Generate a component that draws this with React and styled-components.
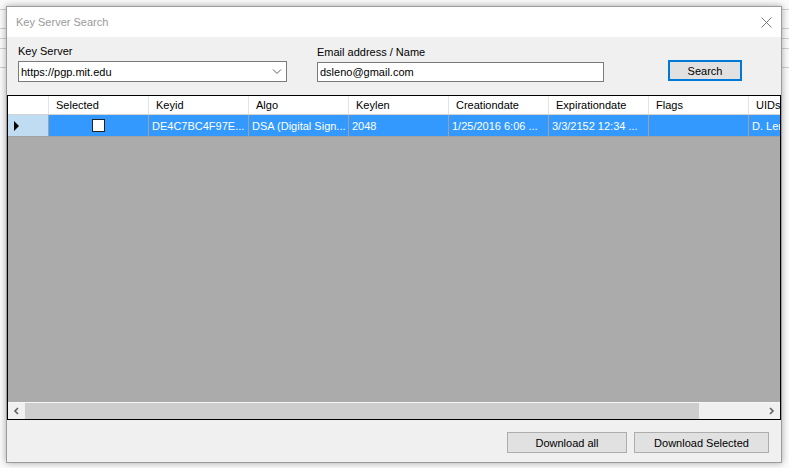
import styled, { createGlobalStyle } from 'styled-components';

const GlobalStyle = createGlobalStyle`
  body {
    margin: 0;
    background: #ffffff;
    font-family: "Liberation Sans", Arial, sans-serif;
    font-size: 11px;
    color: #000;
  }
`;

const Desktop = styled.div`
  width: 789px;
  height: 468px;
  overflow: hidden;
  box-sizing: border-box;
  padding: 6px 0 0 6px;
  background:
    linear-gradient(#cfcfcf, #cfcfcf) 0 9px / 100% 1px no-repeat,
    linear-gradient(#cfcfcf, #cfcfcf) 0 28px / 100% 1px no-repeat,
    linear-gradient(#cfcfcf, #cfcfcf) 0 38px / 100% 1px no-repeat,
    linear-gradient(#cfcfcf, #cfcfcf) 0 48px / 100% 1px no-repeat,
    linear-gradient(#cfcfcf, #cfcfcf) 0 67px / 100% 1px no-repeat,
    #fbfbfb;
`;

const Window = styled.div`
  width: 776px;
  height: 457px;
  box-sizing: border-box;
  border: 1px solid #9c9c9c;
  display: flex;
  flex-direction: column;
  box-shadow: 0 0 7px rgba(0, 0, 0, 0.35);
`;

const TitleBar = styled.div`
  height: 30px;
  flex: none;
  background: #ffffff;
  display: flex;
  align-items: center;
  justify-content: space-between;
  padding: 0 9px 0 9px;
`;

const Title = styled.span`
  color: #9a9a9a;
  font-size: 11px;
`;

const Body = styled.div`
  flex: 1;
  background: #f0f0f0;
  display: flex;
  flex-direction: column;
`;

const FormRow = styled.div`
  height: 58px;
  flex: none;
  box-sizing: border-box;
  padding: 8px 0 0 11px;
  display: flex;
  align-items: flex-start;
`;

const Field = styled.div`
  display: flex;
  flex-direction: column;
  gap: 3px;
  width: ${(p) => p.$width}px;
  margin-left: ${(p) => p.$left || 0}px;
  margin-top: ${(p) => p.$top || 0}px;
`;

const Label = styled.label`
  line-height: 13px;
`;

const Combo = styled.div`
  height: 21px;
  box-sizing: border-box;
  border: 1px solid #7a7a7a;
  background: #fff;
  display: flex;
  align-items: center;
  justify-content: space-between;
  padding: 0 4px 0 2px;
`;

const TextInput = styled.div`
  height: 20px;
  box-sizing: border-box;
  border: 1px solid #7a7a7a;
  background: #fff;
  display: flex;
  align-items: center;
  padding: 0 2px;
`;

const Button = styled.button`
  width: ${(p) => p.$width}px;
  height: 21px;
  box-sizing: border-box;
  margin: ${(p) => p.$margin || 0};
  padding: 0;
  background: #e1e1e1;
  border: ${(p) => (p.$focused ? '2px solid #0078d7' : '1px solid #adadad')};
  font-family: inherit;
  font-size: 11px;
  color: #000;
`;

const Grid = styled.div`
  height: 325px;
  flex: none;
  box-sizing: border-box;
  border: 1px solid #000;
  display: flex;
  flex-direction: column;
  overflow: hidden;
`;

const HeaderRow = styled.div`
  height: 19px;
  flex: none;
  box-sizing: border-box;
  display: flex;
  background: #fff;
  border-bottom: 1px solid #d4d4d4;
`;

const DataRow = styled.div`
  height: 22px;
  flex: none;
  box-sizing: border-box;
  display: flex;
  background: #3399ff;
  border-bottom: 1px solid #a0a0a0;
`;

const Cell = styled.div`
  flex: none;
  width: ${(p) => p.$width || 100}px;
  box-sizing: border-box;
  display: flex;
  align-items: center;
  justify-content: ${(p) => (p.$center ? 'center' : 'flex-start')};
  padding-left: ${(p) => (p.$center ? 0 : p.$pad)}px;
  border-right: 1px solid ${(p) => p.$line};
  background: ${(p) => p.$bg || 'transparent'};
  color: ${(p) => p.$color || '#000'};
  white-space: nowrap;
  overflow: hidden;
`;

const Checkbox = styled.span`
  width: 13px;
  height: 13px;
  box-sizing: border-box;
  border: 1px solid #222;
  background: #fff;
`;

const EmptyArea = styled.div`
  flex: 1;
  background: #ababab;
`;

const ScrollBar = styled.div`
  height: 17px;
  flex: none;
  display: flex;
  background: #f0f0f0;
  border-top: 1px solid #f7f7f7;
  box-sizing: border-box;
`;

const ArrowButton = styled.div`
  width: 17px;
  flex: none;
  display: flex;
  align-items: center;
  justify-content: center;
`;

const Thumb = styled.div`
  width: 674px;
  flex: none;
  background: #cdcdcd;
`;

const Track = styled.div`
  flex: 1;
`;

const Footer = styled.div`
  flex: 1;
  display: flex;
  justify-content: flex-end;
  align-items: flex-start;
  gap: 7px;
  padding: 12px 12px 0 0;
`;

const columns = [
  { name: 'Selected', value: null },
  { name: 'Keyid', value: 'DE4C7BC4F97E...' },
  { name: 'Algo', value: 'DSA (Digital Sign...' },
  { name: 'Keylen', value: '2048' },
  { name: 'Creationdate', value: '1/25/2016 6:06 ...' },
  { name: 'Expirationdate', value: '3/3/2152 12:34 ...' },
  { name: 'Flags', value: '' },
  { name: 'UIDs', value: 'D. Len' },
];

function CloseIcon() {
  return (
    <svg width="11" height="11" viewBox="0 0 11 11">
      <path d="M0.5 0.5 L10.5 10.5 M10.5 0.5 L0.5 10.5" stroke="#7a7a7a" strokeWidth="1" fill="none" />
    </svg>
  );
}

function Chevron({ dir }) {
  const d = {
    down: 'M1 1.5 L5 5.5 L9 1.5',
    left: 'M5 1 L2 4 L5 7',
    right: 'M2 1 L5 4 L2 7',
  }[dir];
  const size = dir === 'down' ? [10, 7] : [7, 8];
  return (
    <svg width={size[0]} height={size[1]} viewBox={`0 0 ${size[0]} ${size[1]}`}>
      <path d={d} stroke="#606060" strokeWidth={dir === 'down' ? 1 : 1.6} fill="none" />
    </svg>
  );
}

function RowPointer() {
  return (
    <svg width="6" height="10" viewBox="0 0 6 10">
      <polygon points="0,0 5,5 0,10" fill="#000" />
    </svg>
  );
}

export default function App() {
  return (
    <>
      <GlobalStyle />
      <Desktop>
        <Window>
          <TitleBar>
            <Title>Key Server Search</Title>
            <CloseIcon />
          </TitleBar>
          <Body>
            <FormRow>
              <Field $width={269}>
                <Label>Key Server</Label>
                <Combo>
                  <span>https://pgp.mit.edu</span>
                  <Chevron dir="down" />
                </Combo>
              </Field>
              <Field $width={287} $left={30} $top={1}>
                <Label>Email address / Name</Label>
                <TextInput>dsleno@gmail.com</TextInput>
              </Field>
              <Button $width={74} $focused $margin="15px 0 0 64px">
                Search
              </Button>
            </FormRow>
            <Grid>
              <HeaderRow>
                <Cell $width={41} $line="#e3e3e3" />
                {columns.map((c) => (
                  <Cell key={c.name} $pad={7} $line="#e3e3e3">
                    {c.name}
                  </Cell>
                ))}
              </HeaderRow>
              <DataRow>
                <Cell $width={41} $pad={6} $line="#a0a0a0" $bg="#bfdcf3">
                  <RowPointer />
                </Cell>
                {columns.map((c) => (
                  <Cell key={c.name} $pad={3} $line="#a0a0a0" $color="#fff" $center={c.value === null}>
                    {c.value === null ? <Checkbox /> : c.value}
                  </Cell>
                ))}
              </DataRow>
              <EmptyArea />
              <ScrollBar>
                <ArrowButton>
                  <Chevron dir="left" />
                </ArrowButton>
                <Thumb />
                <Track />
                <ArrowButton>
                  <Chevron dir="right" />
                </ArrowButton>
              </ScrollBar>
            </Grid>
            <Footer>
              <Button $width={120}>Download all</Button>
              <Button $width={135}>Download Selected</Button>
            </Footer>
          </Body>
        </Window>
      </Desktop>
    </>
  );
}
